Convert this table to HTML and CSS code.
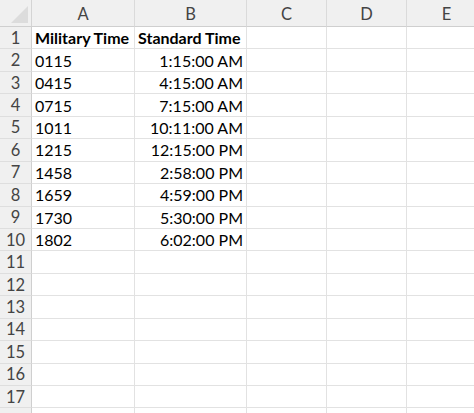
FILE: index.html
```html
<!DOCTYPE html>
<html lang="en">

<head>
  <meta charset="UTF-8">
  <title>Military Time</title>
  <link rel="stylesheet" href="styles.css">
</head>

<body>
  <div class="sheet">
    <div class="corner"><span class="corner-mark"></span></div>
    <div class="col-head">A</div>
    <div class="col-head">B</div>
    <div class="col-head">C</div>
    <div class="col-head">D</div>
    <div class="col-head">E</div>

    <div class="row-head">1</div>
    <div class="cell bold">Military Time</div>
    <div class="cell bold">Standard Time</div>
    <div class="cell"></div><div class="cell"></div><div class="cell"></div>

    <div class="row-head">2</div>
    <div class="cell">0115</div>
    <div class="cell num">1:15:00 AM</div>
    <div class="cell"></div><div class="cell"></div><div class="cell"></div>

    <div class="row-head">3</div>
    <div class="cell">0415</div>
    <div class="cell num">4:15:00 AM</div>
    <div class="cell"></div><div class="cell"></div><div class="cell"></div>

    <div class="row-head">4</div>
    <div class="cell">0715</div>
    <div class="cell num">7:15:00 AM</div>
    <div class="cell"></div><div class="cell"></div><div class="cell"></div>

    <div class="row-head">5</div>
    <div class="cell">1011</div>
    <div class="cell num">10:11:00 AM</div>
    <div class="cell"></div><div class="cell"></div><div class="cell"></div>

    <div class="row-head">6</div>
    <div class="cell">1215</div>
    <div class="cell num">12:15:00 PM</div>
    <div class="cell"></div><div class="cell"></div><div class="cell"></div>

    <div class="row-head">7</div>
    <div class="cell">1458</div>
    <div class="cell num">2:58:00 PM</div>
    <div class="cell"></div><div class="cell"></div><div class="cell"></div>

    <div class="row-head">8</div>
    <div class="cell">1659</div>
    <div class="cell num">4:59:00 PM</div>
    <div class="cell"></div><div class="cell"></div><div class="cell"></div>

    <div class="row-head">9</div>
    <div class="cell">1730</div>
    <div class="cell num">5:30:00 PM</div>
    <div class="cell"></div><div class="cell"></div><div class="cell"></div>

    <div class="row-head">10</div>
    <div class="cell">1802</div>
    <div class="cell num">6:02:00 PM</div>
    <div class="cell"></div><div class="cell"></div><div class="cell"></div>

    <div class="row-head">11</div>
    <div class="cell"></div><div class="cell"></div><div class="cell"></div><div class="cell"></div><div class="cell"></div>
    <div class="row-head">12</div>
    <div class="cell"></div><div class="cell"></div><div class="cell"></div><div class="cell"></div><div class="cell"></div>
    <div class="row-head">13</div>
    <div class="cell"></div><div class="cell"></div><div class="cell"></div><div class="cell"></div><div class="cell"></div>
    <div class="row-head">14</div>
    <div class="cell"></div><div class="cell"></div><div class="cell"></div><div class="cell"></div><div class="cell"></div>
    <div class="row-head">15</div>
    <div class="cell"></div><div class="cell"></div><div class="cell"></div><div class="cell"></div><div class="cell"></div>
    <div class="row-head">16</div>
    <div class="cell"></div><div class="cell"></div><div class="cell"></div><div class="cell"></div><div class="cell"></div>
    <div class="row-head">17</div>
    <div class="cell"></div><div class="cell"></div><div class="cell"></div><div class="cell"></div><div class="cell"></div>
    <div class="row-head"></div>
    <div class="cell"></div><div class="cell"></div><div class="cell"></div><div class="cell"></div><div class="cell"></div>
  </div>
</body>

</html>
```

FILE: styles.css
```css
body {
  margin: 0;
  padding: 0;
  background: #ffffff;
  font-family: Lato, "Liberation Sans", sans-serif;
  overflow: hidden;
}

.sheet {
  display: grid;
  grid-template-columns: 32px 103px 112px 80px 80px 80px;
  grid-template-rows: 27px;
  grid-auto-rows: 22.45px;
  font-size: 16px;
  color: #000000;
}

.corner {
  position: relative;
  background: #f0f0f0;
  border-right: 1px solid #d4d4d4;
  border-bottom: 1px solid #cfcfcf;
}

.corner-mark {
  position: absolute;
  right: 3px;
  bottom: 3px;
  width: 0;
  height: 0;
  border-left: 17px solid transparent;
  border-bottom: 17px solid #dcdcdc;
}

.col-head {
  display: flex;
  align-items: center;
  justify-content: center;
  background: #f0f0f0;
  color: #444444;
  font-size: 16.5px;
  border-right: 1px solid #dadada;
  border-bottom: 1px solid #cfcfcf;
  padding-top: 2px;
}

.row-head {
  display: flex;
  align-items: center;
  justify-content: center;
  background: #f0f0f0;
  color: #444444;
  font-size: 16.5px;
  border-right: 1px solid #cfcfcf;
  border-bottom: 1px solid #dedede;
}

.cell {
  display: flex;
  align-items: center;
  padding: 0 3px;
  border-right: 1px solid #e2e2e2;
  border-bottom: 1px solid #e2e2e2;
  white-space: nowrap;
  overflow: hidden;
}

.bold {
  font-weight: 700;
}

.num {
  justify-content: flex-end;
}
```
